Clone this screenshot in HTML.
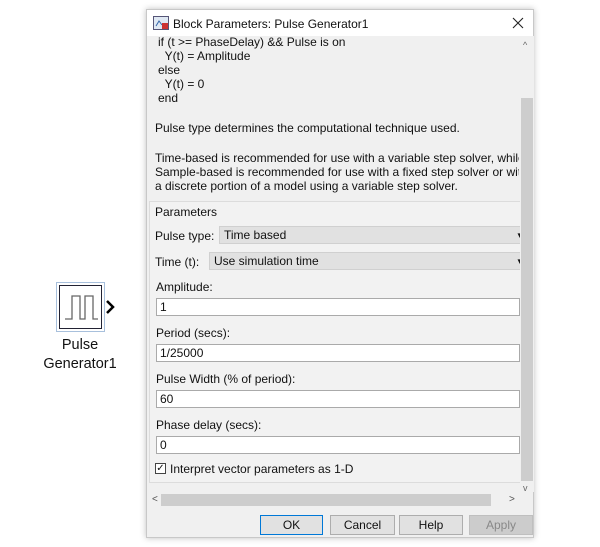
<!DOCTYPE html>
<html><head><style>
*{margin:0;padding:0;box-sizing:border-box}
body{width:600px;height:547px;background:#fff;position:relative;overflow:hidden;font-family:"Liberation Sans",sans-serif;font-size:12px;color:#111}
.a{position:absolute}
.dlg{left:146px;top:9px;width:388px;height:529px;background:#f0f0f0;border:1px solid #c8c8c8;box-shadow:0 0 6px rgba(0,0,0,.25)}
.title{left:0;top:0;width:386px;height:26px;background:#fff}
.t{position:absolute;white-space:nowrap;line-height:14px}
.inp{position:absolute;background:#fff;border:1px solid #aaa;height:18px;padding-left:3px;line-height:16px}
.dd{position:absolute;background:#e1e1e1;border:1px solid #d0d0d0;height:18px;padding-left:4px;line-height:16px}
.dd:after{content:"▾";position:absolute;right:0;top:0;font-size:9px}
.btn{position:absolute;top:505px;height:20px;background:#e1e1e1;border:1px solid #adadad;text-align:center;line-height:18px}
</style></head><body>
<div class="a" style="left:56px;top:282px;width:49px;height:50px;border:1px solid #a8c0dc;background:#fff;padding:2px">
 <div style="width:43px;height:44px;border:1.5px solid #223"></div>
 <svg class="a" style="left:6px;top:9px" width="37" height="32"><path d="M2 27H9V4H17V27H22V4H30V27H35" fill="none" stroke="#666" stroke-width="1.3"/></svg>
</div>
<svg class="a" style="left:105px;top:300px" width="10" height="14"><path d="M2 1L8 7L2 13" fill="none" stroke="#000" stroke-width="2.5"/></svg>
<div class="a" style="left:30px;top:336px;width:100px;text-align:center;font-size:14.5px;line-height:19px;color:#111">Pulse<br>Generator1</div>

<div class="a dlg">
 <div class="a title"></div>
 <svg class="a" style="left:6px;top:6px" width="16" height="14"><rect x="0.5" y="0.5" width="15" height="13" fill="#dfe8f3" stroke="#557"/><path d="M3 10L6 5L9 9" stroke="#36a" fill="none"/><rect x="9" y="7" width="6" height="6" fill="#c33"/></svg>
 <div class="t" style="left:26px;top:7px">Block Parameters: Pulse Generator1</div>
 <svg class="a" style="left:365px;top:7px" width="12" height="12"><path d="M1 1L11 11M11 1L1 11" stroke="#222" stroke-width="1.1"/></svg>
 <div class="t" style="left:11px;top:25px;width:360px;overflow:hidden;height:100px">if (t &gt;= PhaseDelay) &amp;&amp; Pulse is on<br>&nbsp;&nbsp;Y(t) = Amplitude<br>else<br>&nbsp;&nbsp;Y(t) = 0<br>end</div>
 <div class="t" style="left:8px;top:111px">Pulse type determines the computational technique used.</div>
 <div class="t" style="left:8px;top:141px;width:364px;overflow:hidden">Time-based is recommended for use with a variable step solver, while<br>Sample-based is recommended for use with a fixed step solver or within<br>a discrete portion of a model using a variable step solver.</div>
 <div class="a" style="left:2px;top:191px;width:372px;height:282px;border:1px solid #dcdcdc;background:#f2f2f2"></div>
 <div class="t" style="left:8px;top:195px">Parameters</div>
 <div class="t" style="left:8px;top:219px">Pulse type:</div>
 <div class="dd" style="left:72px;top:216px;width:304px">Time based</div>
 <div class="t" style="left:8px;top:245px">Time (t):</div>
 <div class="dd" style="left:62px;top:242px;width:314px">Use simulation time</div>
 <div class="t" style="left:9px;top:270px">Amplitude:</div>
 <div class="inp" style="left:9px;top:288px;width:364px">1</div>
 <div class="t" style="left:9px;top:316px">Period (secs):</div>
 <div class="inp" style="left:9px;top:334px;width:364px">1/25000</div>
 <div class="t" style="left:9px;top:362px">Pulse Width (% of period):</div>
 <div class="inp" style="left:9px;top:380px;width:364px">60</div>
 <div class="t" style="left:9px;top:408px">Phase delay (secs):</div>
 <div class="inp" style="left:9px;top:426px;width:364px">0</div>
 <div class="a" style="left:8px;top:453px;width:11px;height:11px;border:1px solid #444;background:#fff;font-size:10px;line-height:9px;text-align:center">✓</div>
 <div class="t" style="left:23px;top:452px">Interpret vector parameters as 1-D</div>
 <div class="a" style="left:373px;top:26px;width:14px;height:456px;background:#f0f0f0"></div>
 <div class="t" style="left:376px;top:28px;font-size:9px;color:#666">^</div>
 <div class="a" style="left:374px;top:88px;width:12px;height:383px;background:#cdcdcd"></div>
 <div class="t" style="left:376px;top:471px;font-size:9px;color:#666">v</div>
 <div class="t" style="left:5px;top:483px;font-size:10px;color:#555">&lt;</div>
 <div class="a" style="left:14px;top:484px;width:330px;height:12px;background:#cdcdcd"></div>
 <div class="t" style="left:362px;top:483px;font-size:10px;color:#555">&gt;</div>
 <div class="btn" style="left:113px;width:63px;border:1px solid #0078d7">OK</div>
 <div class="btn" style="left:183px;width:65px">Cancel</div>
 <div class="btn" style="left:252px;width:64px">Help</div>
 <div class="btn" style="left:322px;width:64px;background:#ccc;border-color:#bfbfbf;color:#888">Apply</div>
</div>
</body></html>
